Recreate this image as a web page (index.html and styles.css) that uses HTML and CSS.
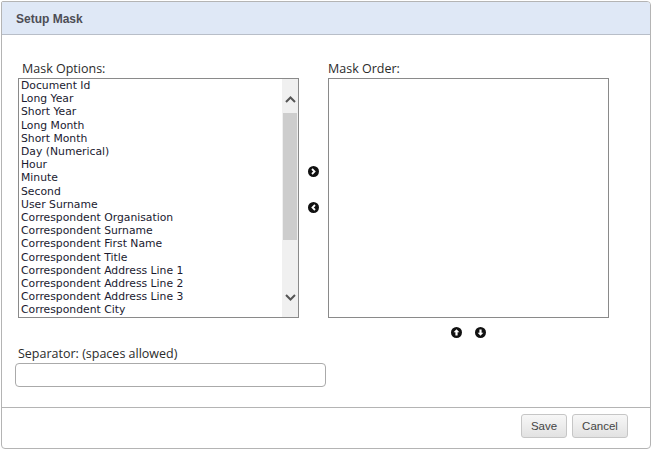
FILE: index.html
```html
<!DOCTYPE html>
<html>
<head>
<meta charset="utf-8">
<link rel="stylesheet" href="styles.css">
</head>
<body>
<div class="dialog">
  <div class="header"><span class="title">Setup Mask</span></div>
  <div class="main">
    <div class="row">
      <div class="col">
        <div class="label">Mask Options:</div>
        <div class="listbox">
          <ul class="items">
            <li>Document Id</li>
            <li>Long Year</li>
            <li>Short Year</li>
            <li>Long Month</li>
            <li>Short Month</li>
            <li>Day (Numerical)</li>
            <li>Hour</li>
            <li>Minute</li>
            <li>Second</li>
            <li>User Surname</li>
            <li>Correspondent Organisation</li>
            <li>Correspondent Surname</li>
            <li>Correspondent First Name</li>
            <li>Correspondent Title</li>
            <li>Correspondent Address Line 1</li>
            <li>Correspondent Address Line 2</li>
            <li>Correspondent Address Line 3</li>
            <li>Correspondent City</li>
          </ul>
          <div class="scrollbar">
            <div class="sb-btn sb-up"><svg width="11" height="7" viewBox="0 0 11 7"><polyline points="1,6 5.5,1.5 10,6" fill="none" stroke="#555" stroke-width="2"/></svg></div>
            <div class="sb-thumb"></div>
            <div class="sb-track"></div>
            <div class="sb-btn sb-down"><svg width="11" height="7" viewBox="0 0 11 7"><polyline points="1,1 5.5,5.5 10,1" fill="none" stroke="#555" stroke-width="2"/></svg></div>
          </div>
        </div>
      </div>
      <div class="movecol">
        <svg class="ic" width="11" height="11" viewBox="0 0 11 11"><circle cx="5.5" cy="5.5" r="5.5" fill="#111"/><polyline points="4,3 6.5,5.5 4,8" fill="none" stroke="#fff" stroke-width="1.8"/></svg>
        <svg class="ic" width="11" height="11" viewBox="0 0 11 11"><circle cx="5.5" cy="5.5" r="5.5" fill="#111"/><polyline points="7,3 4.5,5.5 7,8" fill="none" stroke="#fff" stroke-width="1.8"/></svg>
      </div>
      <div class="col">
        <div class="label label-right">Mask Order:</div>
        <div class="listbox order"></div>
      </div>
    </div>
    <div class="orderrow">
      <svg class="ic" width="11" height="11" viewBox="0 0 11 11"><circle cx="5.5" cy="5.5" r="5.5" fill="#111"/><path d="M5.5 2.2 L8.4 5.3 L6.6 5.3 L6.6 8.6 L4.4 8.6 L4.4 5.3 L2.6 5.3 Z" fill="#fff"/></svg>
      <svg class="ic" width="11" height="11" viewBox="0 0 11 11"><circle cx="5.5" cy="5.5" r="5.5" fill="#111"/><path d="M5.5 8.8 L8.4 5.7 L6.6 5.7 L6.6 2.4 L4.4 2.4 L4.4 5.7 L2.6 5.7 Z" fill="#fff"/></svg>
    </div>
    <div class="separator">
      <div class="label">Separator: (spaces allowed)</div>
      <input class="sep-input" type="text">
    </div>
  </div>
  <div class="footer">
    <button class="btn btn-save">Save</button>
    <button class="btn btn-cancel">Cancel</button>
  </div>
</div>
</body>
</html>
```
FILE: styles.css
```css
html, body {
  margin: 0;
  padding: 0;
  background: #fff;
}
body {
  padding: 1px 0 0 1px;
}
.dialog {
  width: 650px;
  height: 448px;
  box-sizing: border-box;
  border: 1px solid #b4b4b4;
  border-radius: 2px 4px 4px 4px;
  display: flex;
  flex-direction: column;
  font-family: "Open Sans", "Liberation Sans", sans-serif;
  color: #333;
  overflow: hidden;
}
.header {
  height: 32px;
  flex: none;
  background: #dfe8f6;
  border-bottom: 1px solid #b8bec8;
  box-sizing: content-box;
  display: flex;
  align-items: center;
  padding-left: 14px;
}
.title {
  font-family: "Liberation Sans", Arial, sans-serif;
  font-weight: bold;
  font-size: 12px;
  color: #4d4d55;
  margin-top: 2px;
}
.main {
  height: 372px;
  flex: none;
  box-sizing: border-box;
  padding-top: 26px;
}
.row {
  display: flex;
  padding-left: 16px;
}
.col {
  width: 281px;
  display: flex;
  flex-direction: column;
}
.label {
  font-size: 12.5px;
  line-height: 16px;
  padding-left: 4px;
  color: #2b2b2b;
  margin-bottom: 1px;
}
.label-right {
  padding-left: 0;
}
.listbox {
  height: 240px;
  box-sizing: border-box;
  border: 1px solid #8a8a8a;
  display: flex;
  overflow: hidden;
}
.items {
  list-style: none;
  margin: 0;
  padding: 0 0 0 2px;
  flex: 1;
  font-family: "DejaVu Sans", Verdana, sans-serif;
  font-size: 10.8px;
  line-height: 13.2px;
  color: #1a1a30;
  white-space: nowrap;
}
.scrollbar {
  width: 16px;
  flex: none;
  background: #f0f0f0;
  display: flex;
  flex-direction: column;
}
.sb-btn {
  height: 34px;
  display: flex;
  justify-content: center;
}
.sb-up {
  align-items: flex-end;
  padding-bottom: 10px;
  box-sizing: border-box;
}
.sb-down {
  align-items: flex-start;
  padding-top: 11px;
  box-sizing: border-box;
}
.sb-thumb {
  height: 127px;
  background: #cdcdcd;
  margin: 0 1px;
}
.sb-track {
  flex: 1;
}
.movecol {
  width: 29px;
  display: flex;
  flex-direction: column;
  align-items: center;
  padding-top: 105px;
  gap: 25px;
  padding-right: 1px;
  box-sizing: border-box;
}
.ic {
  display: block;
}
.orderrow {
  display: flex;
  justify-content: center;
  gap: 13px;
  width: 281px;
  margin-left: 326px;
  margin-top: 9px;
}
.separator {
  padding-left: 13px;
  margin-top: 8px;
}
.separator .label {
  margin-bottom: 1px;
  padding-left: 3px;
}
.sep-input {
  display: block;
  width: 311px;
  height: 24px;
  box-sizing: border-box;
  border: 1px solid #aaa;
  border-radius: 4px;
  margin: 0;
  padding: 0 4px;
  background: #fff;
}
.footer {
  flex: 1;
  border-top: 1px solid #b4b4b4;
  display: flex;
  justify-content: flex-end;
  align-items: flex-start;
  gap: 5px;
  padding: 6px 22px 0 0;
}
.btn {
  height: 24px;
  box-sizing: border-box;
  border: 1px solid #c6c6c6;
  border-radius: 3px;
  background: linear-gradient(#f7f7f7, #e2e2e2);
  font-family: "Liberation Sans", Arial, sans-serif;
  font-size: 11.5px;
  color: #444;
  padding: 0;
  margin: 0;
}
.btn-save {
  width: 46px;
}
.btn-cancel {
  width: 56px;
}
```
